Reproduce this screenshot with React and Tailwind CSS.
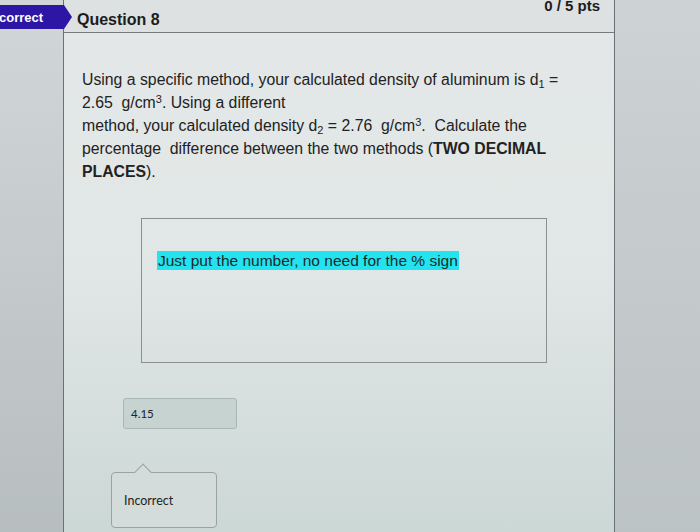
import React from 'react'

/* Quiz question card – photographed screen, incorrect answer shown */
const SANS = { fontFamily: '"Liberation Sans", Arial, sans-serif' }
const LATO = { fontFamily: 'Lato, "Open Sans", sans-serif' }

export default function App() {
  return (
    <div
      className="relative w-[700px] h-[532px] overflow-hidden flex bg-gradient-to-b from-[#d2d6d8] to-[#b7bec0]"
      style={SANS}
    >
      {/* left gutter */}
      <div className="w-[63px] shrink-0" />

      {/* question panel */}
      <div className="w-[552px] shrink-0 flex flex-col border-l border-r border-[#6c7273] bg-gradient-to-b from-[#e4e7e8] via-[#e1e7e6] to-[#ccd8d6]">
        {/* header */}
        <div className="h-[33px] shrink-0 flex justify-between items-start border-b border-[#767b7c] bg-[#dde1e2] pl-[13px] pr-[14px]">
          <span className="pt-[10px] text-[16px] font-bold text-[#1c1c1c] leading-[20px]">Question 8</span>
          <span className="-mt-[4px] text-[15px] font-bold text-[#1c1c1c] leading-[20px]">0 / 5 pts</span>
        </div>

        {/* body */}
        <div className="flex flex-col pl-[18px] pt-[35px]">
          <div className="text-[15.8px] leading-[23px] text-[#222] whitespace-nowrap">
            <div>
              Using a specific method, your calculated density of aluminum is d<sub className="text-[11px]">1</sub> =
            </div>
            <div>
              2.65&nbsp; g/cm<sup className="text-[11px]">3</sup>. Using a different
            </div>
            <div>
              method, your calculated density d<sub className="text-[11px]">2</sub> = 2.76&nbsp; g/cm<sup className="text-[11px]">3</sup>.&nbsp; Calculate the
            </div>
            <div>
              percentage&nbsp; difference between the two methods (<b>TWO DECIMAL</b>
            </div>
            <div>
              <b>PLACES</b>).
            </div>
          </div>

          {/* rich-content answer box */}
          <div className="mt-[35px] ml-[59px] w-[406px] h-[145px] border border-[#8a9090] pl-[15px] pt-[30px]">
            <span className="bg-[#22e3ee] text-[15.5px] leading-[20px] text-[#1d2a2c] px-[1px] py-[1px]">
              Just put the number, no need for the % sign
            </span>
          </div>

          {/* submitted answer */}
          <div
            className="mt-[35px] ml-[41px] w-[114px] h-[31px] rounded-[3px] border border-[#a9b7b4] bg-[#c6d3d0] flex items-center pl-[7px] text-[11.5px] text-[#222]"
            style={LATO}
          >
            4.15
          </div>

          {/* feedback bubble */}
          <div className="relative mt-[43px] ml-[29px] w-[106px] h-[56px] rounded-[4px] border border-[#9aa3a2] bg-[#d3dcda] flex items-center pl-[12px]">
            <span className="absolute -top-[7px] left-[25px] w-[12px] h-[12px] rotate-45 border-l border-t border-[#9aa3a2] bg-[#d3dcda]" />
            <span className="text-[12.5px] text-[#222] mt-[2px]" style={LATO}>
              Incorrect
            </span>
          </div>
        </div>
      </div>

      {/* right gutter */}
      <div className="flex-1 bg-gradient-to-b from-[#cdd2d4] to-[#bcc3c5]" />

      {/* status tag */}
      <div className="absolute left-0 top-[5px] w-[72px] h-[24px] bg-[#2d15a6] [clip-path:polygon(0_0,64px_0,72px_50%,64px_100%,0_100%)] flex items-center">
        <span className="text-[13px] font-bold text-white -ml-[1px] leading-none">correct</span>
      </div>
    </div>
  )
}
